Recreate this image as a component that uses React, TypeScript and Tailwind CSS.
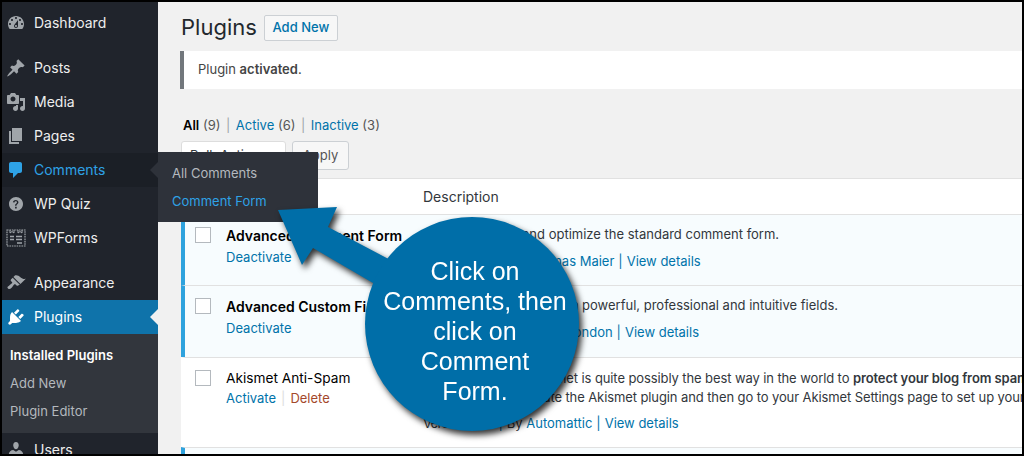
const P = {
  dashboard: "M3.76 16h12.48c1.1-1.37 1.76-3.11 1.76-5 0-4.42-3.58-8-8-8s-8 3.58-8 8c0 1.89.66 3.63 1.76 5zM10 4c.55 0 1 .45 1 1s-.45 1-1 1-1-.45-1-1 .45-1 1-1zM6 6c.55 0 1 .45 1 1s-.45 1-1 1-1-.45-1-1 .45-1 1-1zm8 0c.55 0 1 .45 1 1s-.45 1-1 1-1-.45-1-1 .45-1 1-1zm-5.37 5.55L12 7v6c0 1.1-.9 2-2 2s-2-.9-2-2c0-.57.24-1.08.63-1.45zM4 10c.55 0 1 .45 1 1s-.45 1-1 1-1-.45-1-1 .45-1 1-1zm12 0c.55 0 1 .45 1 1s-.45 1-1 1-1-.45-1-1 .45-1 1-1zm-5 3c0-.55-.45-1-1-1s-1 .45-1 1 .45 1 1 1 1-.45 1-1z",
  post: "M10.44 3.02l1.82-1.82 6.36 6.35-1.83 1.82c-1.05-.68-2.48-.57-3.41.36l-.75.75c-.92.93-1.04 2.35-.35 3.41l-1.83 1.82-2.41-2.41-2.8 2.79c-.42.42-3.38 2.71-3.8 2.29s1.86-3.39 2.28-3.81l2.79-2.79L4.1 9.36l1.83-1.82c1.05.69 2.48.57 3.4-.36l.75-.75c.93-.92 1.05-2.35.36-3.41z",
  media: "M13 11V4c0-.55-.45-1-1-1h-1.67L9 1H5L3.67 3H2c-.55 0-1 .45-1 1v7c0 .55.45 1 1 1h10c.55 0 1-.45 1-1zM7 4.5c1.38 0 2.5 1.12 2.5 2.5S8.38 9.5 7 9.500 4.500 8.380 4.500 7 5.620 4.500 7 4.500zM14 6h5v10.500c0 1.380-1.120 2.500-2.500 2.500S14 17.880 14 16.500s1.120-2.500 2.500-2.500c.17 0 .34.020.5.050V9h-3V6zm-4 8.050V13h2v3.500c0 1.380-1.120 2.500-2.500 2.500S7 17.880 7 16.500 8.120 14 9.500 14c.17 0 .34.020.5.050z",
  page: "M6 15V2h10v13H6zm-1 1h8v2H3V5h2v11z",
  comments: "M5 2h9c1.100 0 2 .9 2 2v7c0 1.100-.9 2-2 2h-2l-5 5v-5H5c-1.100 0-2-.9-2-2V4c0-1.100.9-2 2-2z",
  help: "M17 10c0-3.870-3.140-7-7-7-3.870 0-7 3.130-7 7s3.130 7 7 7c3.860 0 7-3.130 7-7zm-6.300 1.760h-1.600v-.55c0-.25.060-.47.18-.65s.38-.46.78-.83c.32-.29.55-.54.69-.74.14-.21.21-.43.21-.66 0-.3-.11-.54-.32-.72-.21-.19-.49-.28-.85-.28-.31 0-.58.090-.82.27-.24.18-.4.47-.48.86l-1.610-.2c.070-.66.36-1.190.87-1.580.51-.4 1.160-.6 1.960-.6.84 0 1.500.2 1.970.6.48.4.72.92.72 1.560 0 .36-.09.69-.26 1-.18.31-.54.69-1.080 1.160-.27.23-.43.41-.49.54-.06.13-.09.3-.09.5zm-1.600 1.040h1.600v1.600h-1.600v-1.600z",
  appearance: "M14.480 11.060L7.410 3.990l1.500-1.500c.5-.56 2.300-.47 3.510.32 1.210.8 1.430 1.280 2.910 2.100 1.180.64 2.450 1.260 4.450.85zm-.71.71L6.700 4.700 4.930 6.470c-.39.39-.39 1.020 0 1.410l1.060 1.060c.39.39.39 1.030 0 1.420-.6.6-1.430 1.110-2.210 1.690-.35.26-.7.53-1.010.84C1.430 13.230.99 14.500 2 15.500c1.010 1 2.270.58 3.620-.77.31-.31.58-.66.84-1.010.58-.78 1.090-1.610 1.690-2.210.39-.39 1.020-.39 1.410 0l1.060 1.060c.39.39 1.020.39 1.410 0z",
  plugins: "M13.110 4.360L9.870 7.600 8 5.730l3.240-3.240c.35-.34 1.050-.2 1.560.32.52.51.66 1.210.31 1.550zm-8 1.770l.91-1.120 9.010 9.010-1.190.84c-.71.71-2.630 1.160-3.820 1.160H6.140L4.900 17.260c-.59.59-1.540.59-2.120 0-.59-.58-.59-1.530 0-2.120l1.240-1.240v-3.880c0-1.130.4-3.190 1.090-3.890zm7.260 3.970l3.240-3.240c.34-.35 1.040-.21 1.550.31.52.51.66 1.210.31 1.550l-3.240 3.250z",
  users: "M10 9.250c-2.270 0-2.730-3.440-2.730-3.440C7 4.020 7.820 2 9.970 2c2.160 0 2.980 2.020 2.710 3.810 0 0-.41 3.440-2.680 3.440zm0 2.570L12.720 10c2.390 0 4.520 2.330 4.520 4.530v2.490s-3.650 1.130-7.240 1.130c-3.650 0-7.240-1.130-7.240-1.130v-2.490c0-2.250 1.940-4.480 4.470-4.480z",
};

function Dash({ d, className }: { d: string; className: string }) {
  return (
    <svg viewBox="0 0 20 20" className={className} fill="currentColor">
      <path d={d} />
    </svg>
  );
}

function FormsIcon() {
  return (
    <svg viewBox="0 0 20 20" className="w-5 h-5 text-[#a0a5aa]" fill="none" stroke="currentColor">
      <rect x="1" y="2" width="18" height="16" strokeWidth="1.2" strokeDasharray="1.6 .8" />
      <path d="M4 2v3l2-1.500 2 1.500V2M12 2v3l2-1.500L16 5V2" strokeWidth="1" />
      <path d="M4 8.500h4M10 8.500h6M4 11.500h4M10 11.500h6M11 15h5" strokeWidth="1.400" />
    </svg>
  );
}

function MenuRow({
  icon,
  label,
  tone,
}: {
  icon: React.ReactNode;
  label: string;
  tone?: "comments" | "plugins";
}) {
  const box =
    tone === "comments"
      ? "bg-[#1b1f26] text-[#2ea2e6]"
      : tone === "plugins"
        ? "bg-[#0f73aa] text-white"
        : "text-[#eeeeee]";
  return (
    <div className={`relative flex items-center h-[34px] pl-1 ${box}`}>
      <span className="w-[28px] flex justify-start shrink-0">{icon}</span>
      <span className="text-[14px] pb-[2px]">{label}</span>
      {tone === "plugins" && (
        <span className="absolute right-0 top-[9px] border-y-[8px] border-y-transparent border-r-[8px] border-r-[#f1f1f1]" />
      )}
      {tone === "comments" && (
        <span className="absolute right-0 top-[9px] border-y-[8px] border-y-transparent border-r-[8px] border-r-[#2e323a]" />
      )}
    </div>
  );
}

const iconCls = "w-5 h-5 text-[#a0a5aa]";

function Sidebar() {
  return (
    <aside className="w-[156px] shrink-0 bg-[#20242c] pt-1 overflow-hidden">
      <MenuRow icon={<Dash d={P.dashboard} className={iconCls} />} label="Dashboard" />
      <div className="h-[11px]" />
      <MenuRow icon={<Dash d={P.post} className={iconCls} />} label="Posts" />
      <MenuRow icon={<Dash d={P.media} className={iconCls} />} label="Media" />
      <MenuRow icon={<Dash d={P.page} className={iconCls} />} label="Pages" />
      <MenuRow icon={<Dash d={P.comments} className="w-5 h-5 text-[#2ea2e6]" />} label="Comments" tone="comments" />
      <MenuRow icon={<Dash d={P.help} className={iconCls} />} label="WP Quiz" />
      <MenuRow icon={<FormsIcon />} label="WPForms" />
      <div className="h-[11px]" />
      <MenuRow icon={<Dash d={P.appearance} className={iconCls} />} label="Appearance" />
      <MenuRow icon={<Dash d={P.plugins} className="w-5 h-5 text-white" />} label="Plugins" tone="plugins" />
      <div className="h-[99px] bg-[#32363d] pt-[7px] pl-2 text-[13px] text-[#b4b9be]">
        <div className="h-[28px] leading-[28px] font-semibold text-white">Installed Plugins</div>
        <div className="h-[28px] leading-[28px]">Add New</div>
        <div className="h-[28px] leading-[28px]">Plugin Editor</div>
      </div>
      <MenuRow icon={<Dash d={P.users} className={iconCls} />} label="Users" />
    </aside>
  );
}

function Pipe() {
  return <span className="text-[#0073aa] mx-[4px]">|</span>;
}

function FilterPipe() {
  return <span className="text-[#a0a5aa] mx-[5.5px]">|</span>;
}

function Row({
  name,
  bold,
  actions,
  active,
  desc,
  compact,
  meta,
  h,
}: {
  name: string;
  bold?: boolean;
  actions: React.ReactNode;
  active?: boolean;
  desc: React.ReactNode;
  compact?: boolean;
  meta: React.ReactNode;
  h: string;
}) {
  return (
    <div
      className={`flex border-t border-[#e1e1e1] border-l-4 text-[13px] whitespace-nowrap ${h} ${
        active ? "bg-[#f7fcfe] border-l-[#2ea2dd]" : "bg-white border-l-transparent"
      }`}
    >
      <div className="w-[41px] shrink-0 pl-[10px] pt-[12px]">
        <div className="w-4 h-4 border border-[#b4b9be] bg-white" />
      </div>
      <div className={`w-[197px] shrink-0 ${compact ? "pt-[10px]" : "pt-[11px]"}`}>
        <div className={`leading-[20px] text-black ${bold ? "font-semibold text-[14px]" : "text-[13.7px]"}`}>{name}</div>
        <div className={`leading-[20px] text-[#0073aa] ${compact ? "mt-0" : "mt-[1px]"}`}>{actions}</div>
      </div>
      <div className={`min-w-0 text-[#32373c] ${compact ? "pt-[11px]" : "pt-[9px]"}`}>
        {desc}
        <div className={`leading-[20px] ${compact ? "mt-[6px]" : "mt-[7px]"}`}>{meta}</div>
      </div>
    </div>
  );
}

function Callout() {
  return (
    <div className="absolute left-[258px] top-[200px] w-[340px] h-[240px] drop-shadow-[3px_4px_3px_rgba(0,0,0,0.8)]">
      <svg viewBox="0 0 340 240" className="absolute inset-0 w-full h-full">
        <polygon points="20,10 79,7 70,27 140,64 115,83 55,48 44,65" fill="#006ea8" />
        <circle cx="214" cy="124" r="107" fill="#006ea8" />
      </svg>
      <div className="absolute left-[110px] w-[214px] top-[56px] text-center text-white text-[25px] leading-[30px] font-['Liberation_Sans',sans-serif]">
        <div>Click on</div>
        <div>Comments, then</div>
        <div>click on</div>
        <div>Comment</div>
        <div>Form.</div>
      </div>
    </div>
  );
}

export default function App() {
  const link = "text-[#0073aa]";
  return (
    <div className="relative w-[1024px] h-[456px] bg-black p-[2px] overflow-hidden font-['Inter',sans-serif]">
      <div className="flex h-full w-full overflow-hidden">
        <Sidebar />
        <main className="flex-1 min-w-0 bg-[#f1f1f1] pl-[23px] overflow-hidden">
          <div className="flex items-center h-[49px] pt-[3px] pb-[1px]">
            <h1 className="text-[22px] text-[#23282d]">Plugins</h1>
            <span className="ml-[7px] h-[26px] w-[74px] flex items-center justify-center rounded-[2px] border border-[#ccd0d4] bg-[#f7f7f7] text-[13px] font-medium text-[#0073aa]">
              Add New
            </span>
          </div>
          <div className="-ml-[1px] h-[38px] bg-white border-l-4 border-l-[#72777c] flex items-center pl-[14px] text-[13px] text-[#444]">
            <span>
              Plugin <b className="font-semibold">activated</b>.
            </span>
          </div>
          <div className="h-[25px] mt-[24px] ml-[2px] flex items-center text-[13px] text-[#555]">
            <b className="font-semibold text-black">All</b>&nbsp;(9)
            <FilterPipe />
            <span className={link}>Active</span>&nbsp;(6)
            <FilterPipe />
            <span className={link}>Inactive</span>&nbsp;(3)
          </div>
          <div className="flex gap-[6px] mt-[3px] text-[13px] text-[#32373c]">
            <div className="w-[105px] h-[29px] bg-white border border-[#ddd] rounded-[3px] flex items-center justify-between px-2">
              <span>Bulk Actions</span>
              <span className="text-[9px]">▲</span>
            </div>
            <div className="w-[57px] h-[29px] bg-[#f7f7f7] border border-[#ccd0d4] rounded-[3px] flex items-center justify-center text-[#555]">
              Apply
            </div>
          </div>
          <div className="mt-[8px] h-[36px] bg-white flex items-center border-t border-[#e1e1e1] pl-[242px] text-[14px] text-[#32373c]">
            Description
          </div>
          <Row
            h="h-[71px]"
            active
            bold
            name="Advanced Comment Form"
            actions="Deactivate"
            desc={<div className="leading-[20px]">Customize, edit and optimize the standard comment form.</div>}
            meta={
              <>
                <span className="tracking-[0.45px]">Version 1.0</span>
                <Pipe />
                By <span className={link}>Thomas Maier</span>
                <Pipe />
                <span className={link}>View details</span>
              </>
            }
          />
          <Row
            h="h-[72px]"
            active
            bold
            name="Advanced Custom Fields"
            actions="Deactivate"
            desc={
              <div className="leading-[20px]">
                <span className="tracking-[-0.4px]">Customize WordPress with</span> powerful, professional and intuitive fields.
              </div>
            }
            meta={
              <>
                Version 5.6.1
                <Pipe />
                By <span className={link}>Elliot Condon</span>
                <Pipe />
                <span className={link}>View details</span>
              </>
            }
          />
          <Row
            h="h-[90px]"
            compact
            name="Akismet Anti-Spam"
            actions={
              <>
                Activate
                <span className="text-[#dddddd] mx-[5px]">|</span>
                <span className="text-[#a4482b]">Delete</span>
              </>
            }
            desc={
              <div className="tracking-[-0.1px]">
                <div className="leading-[19px]">
                  Used by millions, Akismet is quite possibly the best way in the world to{" "}
                  <b className="font-semibold">protect your blog from spam</b>. Your site is fully configured.
                </div>
                <div className="leading-[19px]">
                  To get started: activate the Akismet plugin and then go to your Akismet Settings page to set up your API key.
                </div>
              </div>
            }
            meta={
              <>
                <span className="tracking-[-0.7px]">Version 4.0.3</span>
                <Pipe />
                By <span className={link}>Automattic</span>
                <Pipe />
                <span className={link}>View details</span>
              </>
            }
          />
          <div className="h-[20px] bg-[#f7fcfe] border-t border-[#e1e1e1] border-l-4 border-l-[#2ea2dd]" />
        </main>
      </div>

      <div className="absolute left-[158px] top-[152px] w-[160px] h-[70px] bg-[#2e323a] pt-[7px] pl-[14px] text-[13px] text-[#b4b9be]">
        <div className="h-[28px] leading-[28px]">All Comments</div>
        <div className="h-[28px] leading-[28px] text-[#2ea2e6]">Comment Form</div>
      </div>

      <Callout />
    </div>
  );
}
